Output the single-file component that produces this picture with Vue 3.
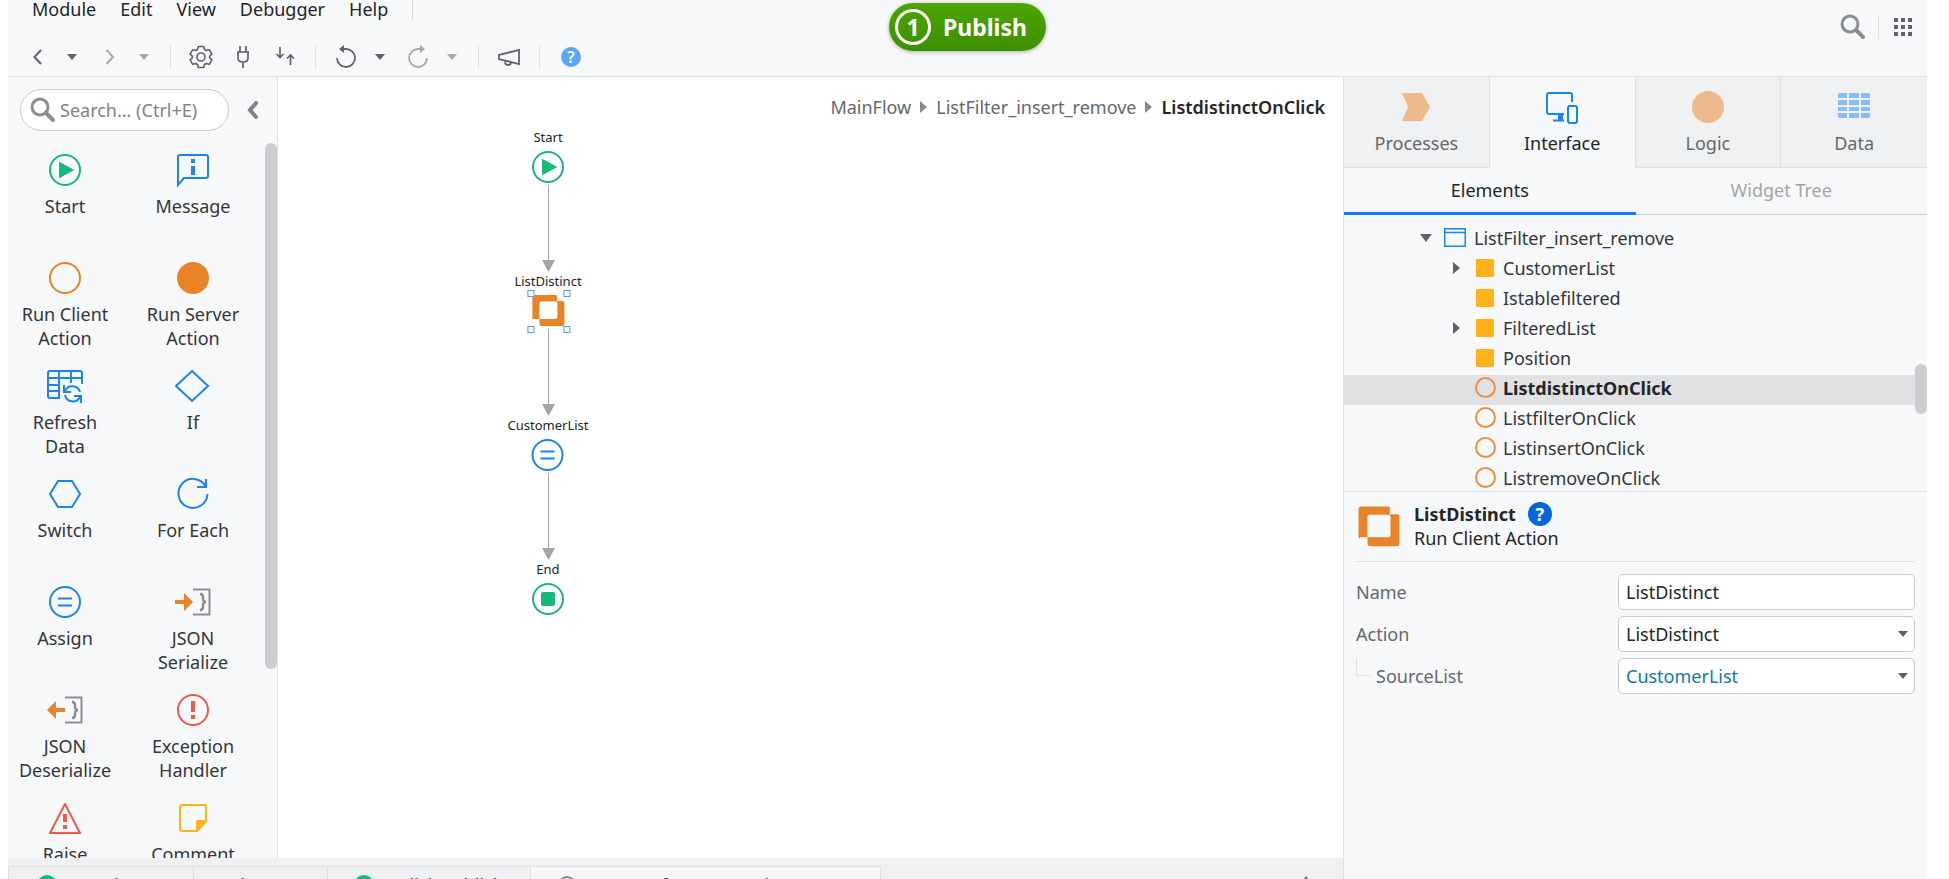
<script setup>
import { ref } from 'vue'

const blue = '#1a84f0'
const orange = '#e98325'
const green = '#17b978'
const red = '#ee5a45'

const icons = {
  start: `<circle cx="18" cy="18" r="15" fill="none" stroke="${green}" stroke-width="2"/><path d="M12.500 10.500v15L26.500 18z" fill="${green}" stroke="${green}" stroke-linejoin="round"/>`,
  message: `<path d="M3 33V5a2 2 0 0 1 2-2h26a2 2 0 0 1 2 2v19a2 2 0 0 1-2 2H9z" fill="none" stroke="${blue}" stroke-width="2"/><path d="M16 7h4v4h-4zM16 14h4v9h-4z" fill="${blue}"/>`,
  client: `<circle cx="18" cy="18" r="15" fill="none" stroke="${orange}" stroke-width="2"/>`,
  server: `<circle cx="18" cy="18" r="16" fill="${orange}"/>`,
  refresh: `<path d="M1 29V5a2 2 0 0 1 2-2h30a2 2 0 0 1 2 2v11M1 10h34M1 17h12M1 23h12M12 3v27M24 3v12M1 28a2 2 0 0 0 2 2h10" fill="none" stroke="${blue}" stroke-width="2"/><path d="M17 17v7h7M18 23a8 8 0 0 1 15 1M34 35v-7h-7M33 29a8 8 0 0 1-15-2" fill="none" stroke="${blue}" stroke-width="2"/>`,
  if: `<path d="M17 3 33 18 17 33 1 18z" fill="none" stroke="${blue}" stroke-width="2"/>`,
  switch: `<path d="M11 5h14l8 13-8 13H11L3 18z" fill="none" stroke="${blue}" stroke-width="2"/>`,
  foreach: `<path d="M30.500 10A14.500 14.500 0 1 0 32.500 18M31 3v8h-9" fill="none" stroke="${blue}" stroke-width="2"/>`,
  assign: `<circle cx="18" cy="18" r="15" fill="none" stroke="${blue}" stroke-width="2"/><path d="M11 14.500h14M11 21.500h14" stroke="${blue}" stroke-width="2"/>`,
  serialize: `<path d="M0 16h9V9l9 9-9 9v-7H0z" fill="${orange}"/><path d="M18 5.500h16.500v25H18" fill="none" stroke="#8b8e91" stroke-width="2"/><path d="M25 10q3 0 3 3v2q0 3 3 3q-3 0-3 3v2q0 3-3 3" fill="none" stroke="#8b8e91" stroke-width="2.500"/>`,
  deserialize: `<path d="M18 16H9V9l-9 9 9 9v-7h9z" fill="${orange}"/><path d="M18 5.500h16.500v25H18" fill="none" stroke="#8b8e91" stroke-width="2"/><path d="M25 10q3 0 3 3v2q0 3 3 3q-3 0-3 3v2q0 3-3 3" fill="none" stroke="#8b8e91" stroke-width="2.500"/>`,
  exception: `<circle cx="18" cy="18" r="15" fill="none" stroke="${red}" stroke-width="2"/><path d="M16 9h4v11h-4zM16 23h4v4h-4z" fill="${red}"/>`,
  raise: `<path d="M18 4 33 33H3z" fill="none" stroke="${red}" stroke-width="2" stroke-linejoin="round"/><path d="M16 14h4v8h-4zM16 25h4v4h-4z" fill="${red}"/>`,
  comment: `<path d="M31 21V7a2 2 0 0 0-2-2H7a2 2 0 0 0-2 2v22a2 2 0 0 0 2 2h15z" fill="none" stroke="#ffb319" stroke-width="2"/><path d="M31 20h-8a2 2 0 0 0-2 2v9h2l8-8z" fill="#ffb319"/>`,
  end: `<circle cx="18" cy="18" r="15" fill="none" stroke="${green}" stroke-width="2"/><rect x="11" y="11" width="14" height="14" rx="2" fill="${green}"/>`,
  library: `<path fill-rule="evenodd" d="M4 2h21a2 2 0 0 1 2 2v4h5a2 2 0 0 1 2 2v21a2 2 0 0 1-2 2H11a2 2 0 0 1-2-2v-4H4a2 2 0 0 1-2-2V4a2 2 0 0 1 2-2zM10 8.500h15a2 2 0 0 1 2 2V24a2 2 0 0 1-2 2H9V9.500z" fill="${orange}"/><path d="M27 3.500v5M3 26.500h6" stroke="#fff" stroke-width="1"/>`,
  processes: `<path d="M4 4h20l8 14-8 14H4l6-14z" fill="#edba8b"/>`,
  interface: `<path d="M28 13V6a2 2 0 0 0-2-2H5a2 2 0 0 0-2 2v17a2 2 0 0 0 2 2h15M9 31.500h11" fill="none" stroke="${blue}" stroke-width="2"/><path d="M14 25h5v6h-5z" fill="${blue}"/><rect x="24" y="17" width="9" height="17" rx="2" fill="none" stroke="${blue}" stroke-width="2"/>`,
  logic: `<circle cx="18" cy="18" r="16" fill="#edba8b"/>`,
  data: `<path d="M2 6a2 2 0 0 1 2-2h7v5H2zM13 4h10v5H13zM25 4h7a2 2 0 0 1 2 2v3h-9zM2 11h9v5H2zM13 11h10v5H13zM25 11h9v5h-9zM2 18h9v4H2zM13 18h10v4H13zM25 18h9v4h-9zM2 24h9v5H4a2 2 0 0 1-2-2zM13 24h10v5H13zM25 24h9v3a2 2 0 0 1-2 2h-7z" fill="#87bbf5"/>`
}

const tools = {
  back: `<path d="M15 5 8.500 12l6.500 7" fill="none" stroke="#5f6266" stroke-width="2"/>`,
  forward: `<path d="M8.500 5 15 12l-6.500 7" fill="none" stroke="#a6a9ac" stroke-width="2"/>`,
  gear: `<path d="M9.300 1.500h5.400l.8 3 1.800 1 3-.8 2.600 4.500-2.200 2v1.600l2.200 2-2.600 4.500-3-.8-1.800 1-.8 3H9.300l-.8-3-1.800-1-3 .8-2.600-4.500 2.200-2v-1.600l-2.200-2 2.600-4.500 3 .8 1.800-1z" fill="none" stroke="#5f6266" stroke-width="1.600" stroke-linejoin="round"/><circle cx="12" cy="12" r="4" fill="none" stroke="#5f6266" stroke-width="1.600"/>`,
  plug: `<path d="M9 1v6M15 1v6M6 7h12M7 7v6q0 4 5 4t5-4V7M12 17v6" fill="none" stroke="#5f6266" stroke-width="1.700"/>`,
  arrows: `<path d="M7 2v10M3.500 9 7 12.500 10.500 9M17.500 20V10M14 13.500l3.500-3.500 3.500 3.500" fill="none" stroke="#5f6266" stroke-width="1.700"/>`,
  undo: `<path d="M9 4h2.500A9 9 0 1 1 3 13" fill="none" stroke="#5f6266" stroke-width="1.800"/><path d="M10 0v8L5 4z" fill="#5f6266"/>`,
  redo: `<path d="M15 4h-2.500A9 9 0 1 0 21 13" fill="none" stroke="#a6a9ac" stroke-width="1.800"/><path d="M14 0v8l5-4z" fill="#a6a9ac"/>`,
  horn: `<path d="M22 5v14L2 14v-4zM8 16q0 4 3 4t3-3" fill="none" stroke="#5f6266" stroke-width="1.800"/>`
}

const menu = ['Module', 'Edit', 'View', 'Debugger', 'Help']
const toolbar = [
  { icon: 'back', label: 'Back' }, { caret: true, label: 'Back history' },
  { icon: 'forward', label: 'Forward' }, { caret: true, dim: true, label: 'Forward history' },
  { sep: true },
  { icon: 'gear', label: 'Module settings' }, { icon: 'plug', label: 'Dependencies' }, { icon: 'arrows', label: 'Merge' },
  { sep: true },
  { icon: 'undo', label: 'Undo' }, { caret: true, label: 'Undo history' },
  { icon: 'redo', label: 'Redo' }, { caret: true, dim: true, label: 'Redo history' },
  { sep: true },
  { icon: 'horn', label: 'Feedback' },
  { sep: true }
]

const palette = [
  ['start', 'Start'], ['message', 'Message'],
  ['client', 'Run Client Action'], ['server', 'Run Server Action'],
  ['refresh', 'Refresh Data'], ['if', 'If'],
  ['switch', 'Switch'], ['foreach', 'For Each'],
  ['assign', 'Assign'], ['serialize', 'JSON Serialize'],
  ['deserialize', 'JSON Deserialize'], ['exception', 'Exception Handler'],
  ['raise', 'Raise Exception'], ['comment', 'Comment']
]

const nodes = [
  { label: 'Start', icon: 'start', y: 51 },
  { label: 'ListDistinct', icon: 'library', y: 195, selected: true },
  { label: 'CustomerList', icon: 'assign', y: 339 },
  { label: 'End', icon: 'end', y: 483 }
]
const edges = [108, 252, 396]

const layers = [
  ['processes', 'Processes'], ['interface', 'Interface'], ['logic', 'Logic'], ['data', 'Data']
]

const tree = [
  { label: 'CustomerList', kind: 'var', open: false },
  { label: 'Istablefiltered', kind: 'var' },
  { label: 'FilteredList', kind: 'var', open: false },
  { label: 'Position', kind: 'var' },
  { label: 'ListdistinctOnClick', kind: 'action', selected: true },
  { label: 'ListfilterOnClick', kind: 'action' },
  { label: 'ListinsertOnClick', kind: 'action' },
  { label: 'ListremoveOnClick', kind: 'action' }
]

const search = ref('')
const name = ref('ListDistinct')
</script>

<template>
  <div class="app">
    <header class="header">
      <div class="left">
        <nav class="menu">
          <button v-for="m in menu" :key="m" type="button">{{ m }}</button>
          <span class="menu-sep"></span>
        </nav>
        <div class="toolbar">
          <template v-for="(t, i) in toolbar" :key="i">
            <span v-if="t.sep" class="sep"></span>
            <button v-else-if="t.caret" type="button" class="caret" :class="{ dim: t.dim }" :aria-label="t.label">
              <svg width="10" height="6" viewBox="0 0 10 6"><path d="M0 0h10L5 6z" fill="currentColor" /></svg>
            </button>
            <button v-else type="button" class="tool" :aria-label="t.label">
              <svg width="24" height="24" viewBox="0 0 24 24" v-html="tools[t.icon]"></svg>
            </button>
          </template>
          <button type="button" class="help">?</button>
        </div>
      </div>
      <button type="button" class="publish"><span class="one">1</span>Publish</button>
      <div class="right">
        <button type="button" aria-label="Search">
          <svg width="26" height="26" viewBox="0 0 26 26" fill="none" stroke="#8b8e91"><circle cx="10" cy="10" r="8" stroke-width="3" /><path d="m16 16 7 7" stroke-width="4" stroke-linecap="round" /></svg>
        </button>
        <span class="sep"></span>
        <button type="button" aria-label="Apps">
          <svg width="18" height="18" viewBox="0 0 18 18" fill="#5f6266"><path d="M0 0h4v4H0zM7 0h4v4H7zM14 0h4v4h-4zM0 7h4v4H0zM7 7h4v4H7zM14 7h4v4h-4zM0 14h4v4H0zM7 14h4v4H7zM14 14h4v4h-4z" /></svg>
        </button>
      </div>
    </header>

    <div class="body">
      <div class="work">
        <div class="stage">
          <aside class="toolbox">
            <div class="search-row">
              <label class="search">
                <svg width="26" height="26" viewBox="0 0 26 26" fill="none" stroke="#8b8e91"><circle cx="10" cy="10" r="8" stroke-width="3" /><path d="m16 16 7 7" stroke-width="4" stroke-linecap="round" /></svg>
                <input v-model="search" type="text" placeholder="Search... (Ctrl+E)" aria-label="Search" />
              </label>
              <button type="button" class="collapse" aria-label="Collapse">
                <svg width="12" height="18" viewBox="0 0 12 18"><path d="M9 2 3 9l6 7" fill="none" stroke="#808386" stroke-width="4" stroke-linecap="round" /></svg>
              </button>
            </div>
            <div class="palette">
              <button v-for="[icon, label] in palette" :key="label" type="button" class="item">
                <svg width="36" height="36" viewBox="0 0 36 36" v-html="icons[icon]"></svg>
                <span>{{ label }}</span>
              </button>
            </div>
            <span class="thumb"></span>
          </aside>

          <main class="canvas">
            <nav class="crumbs">
              <a href="#">MainFlow</a>
              <svg width="7" height="12" viewBox="0 0 7 12"><path d="M0 0v12l7-6z" fill="#85888c" /></svg>
              <a href="#">ListFilter_insert_remove</a>
              <svg width="7" height="12" viewBox="0 0 7 12"><path d="M0 0v12l7-6z" fill="#85888c" /></svg>
              <strong>ListdistinctOnClick</strong>
            </nav>
            <svg v-for="y in edges" :key="y" class="edge" :style="{ top: y + 'px' }" width="14" height="88" viewBox="0 0 14 88">
              <path d="M7.500 0v76" stroke="#a3a5a8" /><path d="M1 75h13L7.500 87z" fill="#a3a5a8" />
            </svg>
            <div v-for="n in nodes" :key="n.label" class="node" :style="{ top: n.y + 'px' }">
              <span>{{ n.label }}</span>
              <div class="glyph">
                <svg width="36" height="36" viewBox="0 0 36 36" v-html="icons[n.icon]"></svg>
                <template v-if="n.selected"><i class="h tl"></i><i class="h tr"></i><i class="h bl"></i><i class="h br"></i></template>
              </div>
            </div>
          </main>
        </div>

        <footer class="dock">
          <button type="button" class="dtab first"><span class="dot"></span>TrueChange</button>
          <button type="button" class="dtab second">Debugger</button>
          <button type="button" class="dtab third"><span class="dot"></span>1-Click Publish</button>
          <button type="button" class="dtab fourth active"><span class="ring"></span>Usages of CustomerList</button>
          <button type="button" class="expand" aria-label="Expand">
            <svg width="12" height="12" viewBox="0 0 12 12"><path d="m6 0 6 8H0z" fill="#77797d" /></svg>
          </button>
        </footer>
      </div>

      <aside class="panel">
        <div class="layers">
          <button v-for="[icon, label] in layers" :key="label" type="button" :class="{ active: icon === 'interface' }">
            <svg width="36" height="36" viewBox="0 0 36 36" v-html="icons[icon]"></svg>
            <span>{{ label }}</span>
          </button>
        </div>
        <div class="subtabs">
          <button type="button" class="active">Elements</button>
          <button type="button">Widget Tree</button>
        </div>
        <div class="tree">
          <div class="row root">
            <svg width="12" height="8" viewBox="0 0 12 8"><path d="M0 0h12L6 8z" fill="#5f6266" /></svg>
            <svg class="screen" width="22" height="19" viewBox="0 0 22 19"><path d="M.75.75h20.500v17.500H.75zM1 4.500h20" fill="none" stroke="#1a84f0" stroke-width="1.500" /></svg>
            <span>ListFilter_insert_remove</span>
          </div>
          <div v-for="r in tree" :key="r.label" class="row" :class="{ selected: r.selected }">
            <span class="twist"><svg v-if="r.open === false" width="7" height="12" viewBox="0 0 7 12"><path d="M0 0v12l7-6z" fill="#5f6266" /></svg></span>
            <span class="kind"><i :class="r.kind"></i></span>
            <span>{{ r.label }}</span>
          </div>
          <span class="thumb"></span>
        </div>
        <section class="props">
          <div class="title">
            <svg width="46" height="46" viewBox="0 0 36 36" v-html="icons.library"></svg>
            <div>
              <div class="name"><strong>ListDistinct</strong><button type="button" class="help">?</button></div>
              <div>Run Client Action</div>
            </div>
          </div>
          <div class="field">
            <label for="f-name">Name</label>
            <input id="f-name" v-model="name" type="text" />
          </div>
          <div class="field">
            <label for="f-action">Action</label>
            <div class="select">
              <select id="f-action"><option>ListDistinct</option></select>
              <svg width="10" height="6" viewBox="0 0 10 6"><path d="M0 0h10L5 6z" fill="#5f6266" /></svg>
            </div>
          </div>
          <div class="field sub">
            <label for="f-source"><i class="branch"></i>SourceList</label>
            <div class="select link">
              <select id="f-source"><option>CustomerList</option></select>
              <svg width="10" height="6" viewBox="0 0 10 6"><path d="M0 0h10L5 6z" fill="#5f6266" /></svg>
            </div>
          </div>
        </section>
      </aside>
    </div>
  </div>
</template>

<style>
body { background: #fff; }
</style>

<style scoped>
* { box-sizing: border-box; }
.app {
  display: flex;
  flex-direction: column;
  height: 100vh;
  overflow: hidden;
  padding: 0 22px 0 8px;
  font: 18px/24px "Noto Sans", sans-serif;
  color: #33363a;
}
svg { display: block; flex: none; }
button {
  border: 0;
  padding: 0;
  background: none;
  font: inherit;
  color: inherit;
}
.header {
  display: grid;
  grid-template-columns: 1fr auto 1fr;
  align-items: start;
  height: 77px;
  flex: none;
  background: #f7f8fa;
  border-bottom: 1px solid #dee0e2;
}
.menu {
  display: flex;
  gap: 24px;
  height: 20px;
  padding-left: 24px;
  color: #222529;
}
.menu button { line-height: 18px; height: 18px; }
.menu-sep { width: 1px; background: #d5d7da; }
.toolbar {
  display: flex;
  align-items: center;
  gap: 18px;
  height: 24px;
  margin-top: 25px;
  padding-left: 18px;
}
.tool { width: 24px; height: 24px; }
.caret { width: 12px; margin: 0 2px 0 -2px; color: #5f6266; display: flex; justify-content: center; }
.caret.dim { color: #a6a9ac; }
.sep { width: 1px; height: 24px; background: #dee0e2; }
.toolbar .help {
  width: 20px;
  height: 20px;
  margin-left: 3px;
  border-radius: 50%;
  background: #5aa6f5;
  color: #fff;
  font-size: 16px;
  font-weight: 600;
  line-height: 20px;
}
.publish {
  display: flex;
  align-items: center;
  gap: 12px;
  height: 48px;
  margin-top: 3px;
  padding: 0 19px 0 6px;
  border-radius: 24px;
  background: linear-gradient(#4aa500, #3f8f00);
  box-shadow: 0 1px 4px rgba(0, 0, 0, 0.3);
  color: #fff;
  font-size: 23px;
  font-weight: 700;
}
.one {
  width: 36px;
  height: 36px;
  border: 3px solid #fff;
  border-radius: 50%;
  line-height: 30px;
}
.right {
  display: flex;
  justify-content: flex-end;
  align-items: center;
  gap: 15px;
  height: 54px;
  padding-right: 15px;
}
.right .sep { margin-left: -3px; }
.body { display: flex; flex: 1; min-height: 0; }
.work { display: flex; flex-direction: column; flex: 1; min-width: 0; }
.stage { display: flex; flex: 1; min-height: 0; }
.toolbox {
  position: relative;
  display: flex;
  flex-direction: column;
  width: 270px;
  flex: none;
  overflow: hidden;
  background: #f7f8fa;
  border-right: 1px solid #dee0e2;
}
.search-row { display: flex; align-items: center; gap: 18px; padding: 12px 0 0 12px; margin-bottom: 21px; }
.search {
  display: flex;
  align-items: center;
  gap: 4px;
  width: 209px;
  height: 42px;
  padding: 0 9px;
  border: 1px solid #c9cbce;
  border-radius: 21px;
  background: #fff;
}
.search input {
  min-width: 0;
  flex: 1;
  border: 0;
  padding: 0;
  background: none;
  font: inherit;
}
.search input::placeholder { color: #808386; opacity: 1; }
.palette {
  display: grid;
  grid-template-columns: 114px 114px;
  grid-auto-rows: 108px;
  column-gap: 14px;
}
.item { display: flex; flex-direction: column; align-items: center; gap: 6px; padding: 0 6px; }
.thumb {
  position: absolute;
  right: 0;
  width: 12px;
  border-radius: 6px;
  background: #cbccd0;
}
.toolbox .thumb { top: 66px; height: 526px; }
.canvas { position: relative; flex: 1; background: #fff; }
.crumbs {
  display: flex;
  justify-content: flex-end;
  align-items: center;
  gap: 9px;
  padding: 18px 18px 0 0;
}
.crumbs a { color: #65686c; text-decoration: none; }
.crumbs strong { font-weight: 600; color: #222529; }
.node {
  position: absolute;
  left: 270px;
  display: flex;
  flex-direction: column;
  align-items: center;
  gap: 3px;
  transform: translateX(-50%);
  font-size: 13px;
  line-height: 18px;
  color: #222529;
}
.glyph { position: relative; }
.h {
  position: absolute;
  width: 7px;
  height: 7px;
  border: 1px solid #4c9df4;
  background: #fff;
}
.tl { left: -3px; top: -3px; }
.tr { right: -4px; top: -3px; }
.bl { left: -3px; bottom: -4px; }
.br { right: -4px; bottom: -4px; }
.edge { position: absolute; left: 263px; }
.dock {
  display: flex;
  height: 21px;
  flex: none;
  overflow: hidden;
  padding-top: 8px;
  background: #eff0f2;
}
.dtab {
  display: flex;
  align-items: center;
  gap: 8px;
  flex: none;
  height: 38px;
  border: 1px solid #dee0e2;
  border-right: 0;
}
.dtab.active { background: #f7f8fa; border-right: 1px solid #dee0e2; }
.first { width: 185px; padding-left: 28px; }
.second { width: 134px; padding-left: 23px; }
.third { width: 203px; padding-left: 26px; }
.fourth { width: 351px; padding-left: 27px; }
.dot { width: 20px; height: 20px; border-radius: 50%; background: #17b978; }
.ring { width: 18px; height: 18px; border: 2px solid #85888c; border-radius: 50%; }
.expand { margin: 10px 31px 0 auto; height: 12px; }
.panel {
  display: flex;
  flex-direction: column;
  width: 584px;
  flex: none;
  background: #f7f8fa;
  border-left: 1px solid #dee0e2;
}
.layers { display: grid; grid-template-columns: repeat(4, 1fr); height: 91px; flex: none; }
.layers button {
  display: flex;
  flex-direction: column;
  align-items: center;
  gap: 6px;
  padding-top: 12px;
  background: #eff0f2;
  border-bottom: 1px solid #dee0e2;
  border-right: 1px solid #dee0e2;
  color: #65686c;
}
.layers button:last-child { border-right: 0; }
.layers .active { background: #f7f8fa; border-bottom-color: #f7f8fa; color: #222529; }
.subtabs { display: grid; grid-template-columns: 1fr 1fr; height: 47px; flex: none; }
.subtabs button { border-bottom: 1px solid #c9cbce; padding: 0 0 2px; color: #a3a5a8; }
.subtabs .active { border-bottom: 3px solid #147df5; padding: 0; color: #222529; }
.tree { position: relative; padding-top: 10px; height: 277px; flex: none; border-bottom: 1px solid #dee0e2; overflow: hidden; }
.row { display: flex; align-items: center; height: 30px; padding: 0 0 5px 109px; }
.root { padding-left: 76px; }
.root .screen { margin: 0 8px 0 12px; }
.twist { width: 20px; }
.kind { display: flex; justify-content: center; width: 24px; margin-right: 6px; }
.kind i { display: block; }
.var { width: 18px; height: 18px; border-radius: 1px; background: #ffb319; }
.action { width: 21px; height: 21px; border: 2px solid #ec9040; border-radius: 50%; }
.selected { background: #e0e1e3; font-weight: 700; color: #222529; }
.tree .thumb { top: 149px; height: 50px; }
.props { padding: 10px 12px; }
.title {
  display: flex;
  align-items: flex-end;
  gap: 12px;
  padding-bottom: 11px;
  margin-bottom: 12px;
  border-bottom: 1px solid #dee0e2;
  color: #222529;
}
.name { display: flex; gap: 12px; }
.name .help {
  width: 24px;
  height: 24px;
  border-radius: 50%;
  background: #0566dc;
  color: #fff;
  font-weight: 700;
}
.field {
  display: grid;
  grid-template-columns: 262px 1fr;
  align-items: center;
  margin-bottom: 6px;
}
.field label { color: #65686c; }
.sub label { position: relative; padding-left: 20px; }
.branch {
  position: absolute;
  left: 0;
  top: -6px;
  width: 15px;
  height: 18px;
  border: solid #dee0e2;
  border-width: 0 0 1px 1px;
}
.field input, .field select {
  display: block;
  width: 100%;
  height: 36px;
  padding: 0 7px;
  border: 1px solid #c9cbce;
  border-radius: 5px;
  background: #fff;
  font: inherit;
  color: #222529;
  appearance: none;
}
.select { position: relative; }
.select svg { position: absolute; right: 7px; top: 15px; }
.field .link select { color: #127a9e; }
</style>
